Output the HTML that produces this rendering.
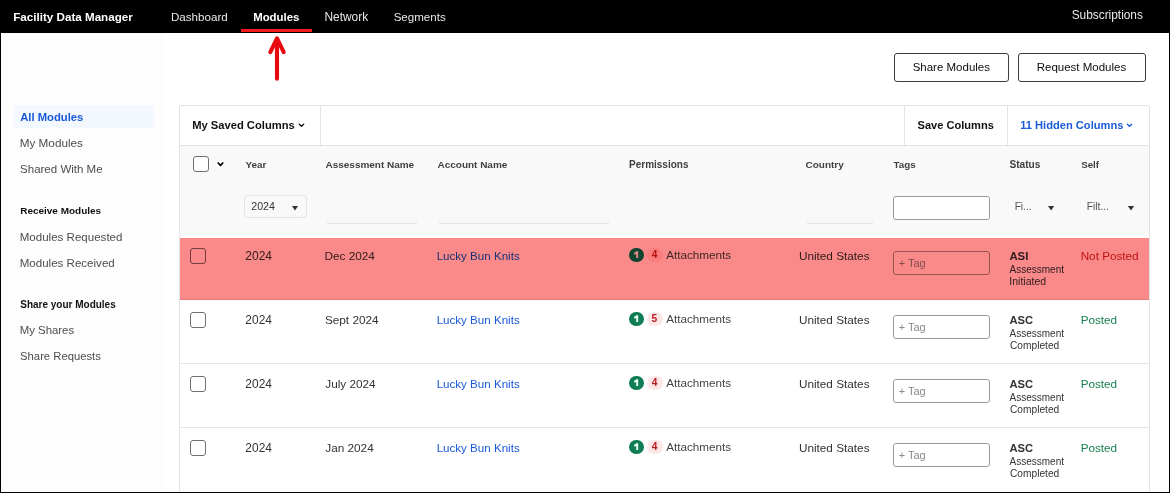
<!DOCTYPE html>
<html><head><meta charset="utf-8"><style>
html,body{margin:0;padding:0;}
body{width:1170px;height:493px;position:relative;overflow:hidden;background:#fff;font-family:"Liberation Sans",sans-serif;}
.a{position:absolute;box-sizing:border-box;}
.t{position:absolute;white-space:pre;font-family:"Liberation Sans",sans-serif;}
.cb{position:absolute;box-sizing:border-box;width:16px;height:16px;border:1px solid #707070;border-radius:3px;background:#fff;}
.badge{position:absolute;box-sizing:border-box;height:14px;border-radius:7px;font-family:"Liberation Sans",sans-serif;font-weight:700;font-size:10px;line-height:14px;text-align:center;}
.tag{position:absolute;box-sizing:border-box;border:1px solid #9a9a9a;border-radius:3px;background:#fff;}
</style></head><body>
<div class="a" style="left:1px;top:33px;width:165px;height:460px;background:#fdfdfd"></div>
<div class="a" style="left:0px;top:0px;width:1170px;height:33px;background:#000"></div>
<div class="a" style="left:241px;top:29px;width:71px;height:3px;background:#fb1a1a"></div>
<svg class="a" style="left:0;top:0" width="1170" height="100"><g stroke="#e8090e" stroke-width="4.1" stroke-linecap="round" stroke-linejoin="round" fill="none"><path d="M277 78.7 L277 39"/><path d="M270.3 52.2 L277 38.4 L283.7 52.2"/></g></svg>
<div class="a" style="left:894px;top:53px;width:115px;height:29px;border:1px solid #3c3c3c;border-radius:3px;background:#fff"></div>
<div class="a" style="left:1018px;top:53px;width:128px;height:29px;border:1px solid #3c3c3c;border-radius:3px;background:#fff"></div>
<div class="a" style="left:14px;top:105px;width:140px;height:23px;background:#f3f7fe;border-radius:2px"></div>
<div class="a" style="left:179px;top:105px;width:971px;height:400px;border:1px solid #e2e2e2;border-radius:2px;background:#fff"></div>
<div class="a" style="left:180px;top:145px;width:969px;height:1px;background:#e2e2e2"></div>
<div class="a" style="left:320px;top:106px;width:1px;height:39px;background:#e2e2e2"></div>
<div class="a" style="left:904px;top:106px;width:1px;height:39px;background:#e2e2e2"></div>
<div class="a" style="left:1007px;top:106px;width:1px;height:39px;background:#e2e2e2"></div>
<div class="a" style="left:180px;top:146px;width:969px;height:90px;background:#f9f9f9"></div>
<div class="cb" style="left:193px;top:156px"></div>
<div class="a" style="left:244px;top:195px;width:63px;height:23px;border:1px solid #e3e3e3;border-radius:4px;background:#f9f9f9"></div>
<div class="a" style="left:326px;top:212px;width:92px;height:12px;border-bottom:1px solid #e4e4e4;border-radius:0 0 3px 3px;background:#f9f8f9"></div>
<div class="a" style="left:438px;top:212px;width:172px;height:12px;border-bottom:1px solid #e4e4e4;border-radius:0 0 3px 3px;background:#f9f8f9"></div>
<div class="a" style="left:806px;top:212px;width:68px;height:12px;border-bottom:1px solid #e4e4e4;border-radius:0 0 3px 3px;background:#f9f8f9"></div>
<div class="tag" style="left:893px;top:196px;width:97px;height:24px"></div>
<svg class="a" style="left:0;top:0" width="1170" height="240"><g fill="none" stroke-linecap="round" stroke-linejoin="round"><path d="M218.2 163 L220.5 165.3 L222.8 163" stroke="#000" stroke-width="1.7"/><path d="M299.3 124.3 L301.5 126.3 L303.7 124.3" stroke="#111" stroke-width="1.35"/><path d="M1127.4 124.3 L1129.5 126.3 L1131.6 124.3" stroke="#1a5ad9" stroke-width="1.35"/></g><g fill="#333"><path d="M292 206 L298 206 L295 210.5 Z"/><path d="M1048 206 L1054.2 206 L1051.1 210.5 Z"/><path d="M1127.8 206 L1134.1 206 L1131 210.5 Z"/></g></svg>
<div class="cb" style="left:190px;top:248px"></div>
<div class="badge" style="left:629px;top:248px;width:15px;background:#117d55"></div>
<svg class="a" style="left:629px;top:248px" width="15" height="14"><path d="M7.2 3.3 H9.2 V10 H7.2 V5.9 L5.1 6.7 V5.1 Z" fill="#eafaf1"/></svg>
<div class="badge" style="left:647px;top:248px;width:16px;background:#fde6e6"></div>
<div class="tag" style="left:893px;top:251px;width:97px;height:24px"></div>
<div class="a" style="left:180px;top:299px;width:969px;height:1px;background:#e6e6e6"></div>
<div class="cb" style="left:190px;top:312px"></div>
<div class="badge" style="left:629px;top:312px;width:15px;background:#117d55"></div>
<svg class="a" style="left:629px;top:312px" width="15" height="14"><path d="M7.2 3.3 H9.2 V10 H7.2 V5.9 L5.1 6.7 V5.1 Z" fill="#eafaf1"/></svg>
<div class="badge" style="left:647px;top:312px;width:16px;background:#fde6e6"></div>
<div class="tag" style="left:893px;top:315px;width:97px;height:24px"></div>
<div class="a" style="left:180px;top:363px;width:969px;height:1px;background:#e6e6e6"></div>
<div class="cb" style="left:190px;top:376px"></div>
<div class="badge" style="left:629px;top:376px;width:15px;background:#117d55"></div>
<svg class="a" style="left:629px;top:376px" width="15" height="14"><path d="M7.2 3.3 H9.2 V10 H7.2 V5.9 L5.1 6.7 V5.1 Z" fill="#eafaf1"/></svg>
<div class="badge" style="left:647px;top:376px;width:16px;background:#fde6e6"></div>
<div class="tag" style="left:893px;top:379px;width:97px;height:24px"></div>
<div class="a" style="left:180px;top:427px;width:969px;height:1px;background:#e6e6e6"></div>
<div class="cb" style="left:190px;top:440px"></div>
<div class="badge" style="left:629px;top:440px;width:15px;background:#117d55"></div>
<svg class="a" style="left:629px;top:440px" width="15" height="14"><path d="M7.2 3.3 H9.2 V10 H7.2 V5.9 L5.1 6.7 V5.1 Z" fill="#eafaf1"/></svg>
<div class="badge" style="left:647px;top:440px;width:16px;background:#fde6e6"></div>
<div class="tag" style="left:893px;top:443px;width:97px;height:24px"></div>
<div class="t" style="left:13.24px;top:11px;font-size:11.64px;line-height:11.64px;font-weight:700;color:#fff">Facility Data Manager</div>
<div class="t" style="left:170.91px;top:11px;font-size:11.61px;line-height:11.61px;font-weight:400;color:#e8e8e8">Dashboard</div>
<div class="t" style="left:253.14px;top:12px;font-size:11.42px;line-height:11.42px;font-weight:700;color:#fff">Modules</div>
<div class="t" style="left:324.48px;top:12px;font-size:11.91px;line-height:11.91px;font-weight:400;color:#e8e8e8">Network</div>
<div class="t" style="left:393.63px;top:12px;font-size:11.57px;line-height:11.57px;font-weight:400;color:#e8e8e8">Segments</div>
<div class="t" style="left:1071.64px;top:10px;font-size:11.89px;line-height:11.89px;font-weight:400;color:#e8e8e8">Subscriptions</div>
<div class="t" style="left:912.66px;top:62px;font-size:11.5px;line-height:11.5px;font-weight:400;color:#0c0c0c">Share Modules</div>
<div class="t" style="left:1036.71px;top:62px;font-size:11.51px;line-height:11.51px;font-weight:400;color:#0c0c0c">Request Modules</div>
<div class="t" style="left:20.16px;top:112px;font-size:11.27px;line-height:11.27px;font-weight:700;color:#1a5ad9">All Modules</div>
<div class="t" style="left:19.74px;top:137px;font-size:11.73px;line-height:11.73px;font-weight:400;color:#4d4d4d">My Modules</div>
<div class="t" style="left:20.06px;top:164px;font-size:11.52px;line-height:11.52px;font-weight:400;color:#4d4d4d">Shared With Me</div>
<div class="t" style="left:20.19px;top:206px;font-size:9.97px;line-height:9.97px;font-weight:700;color:#111">Receive Modules</div>
<div class="t" style="left:19.74px;top:232px;font-size:11.56px;line-height:11.56px;font-weight:400;color:#4d4d4d">Modules Requested</div>
<div class="t" style="left:19.74px;top:258px;font-size:11.55px;line-height:11.55px;font-weight:400;color:#4d4d4d">Modules Received</div>
<div class="t" style="left:20.3px;top:300px;font-size:9.99px;line-height:9.99px;font-weight:700;color:#111">Share your Modules</div>
<div class="t" style="left:19.75px;top:325px;font-size:11.39px;line-height:11.39px;font-weight:400;color:#4d4d4d">My Shares</div>
<div class="t" style="left:20.12px;top:351px;font-size:11.25px;line-height:11.25px;font-weight:400;color:#4d4d4d">Share Requests</div>
<div class="t" style="left:192.15px;top:120px;font-size:11.19px;line-height:11.19px;font-weight:700;color:#111">My Saved Columns</div>
<div class="t" style="left:917.57px;top:120px;font-size:11.07px;line-height:11.07px;font-weight:700;color:#111">Save Columns</div>
<div class="t" style="left:1020.19px;top:120px;font-size:11.13px;line-height:11.13px;font-weight:700;color:#1a5ad9">11 Hidden Columns</div>
<div class="t" style="left:245.47px;top:160px;font-size:9.89px;line-height:9.89px;font-weight:700;color:#3f3f3f">Year</div>
<div class="t" style="left:325.5px;top:160px;font-size:9.97px;line-height:9.97px;font-weight:700;color:#3f3f3f">Assessment Name</div>
<div class="t" style="left:437.5px;top:160px;font-size:9.97px;line-height:9.97px;font-weight:700;color:#3f3f3f">Account Name</div>
<div class="t" style="left:629.02px;top:160px;font-size:10.0px;line-height:10.0px;font-weight:700;color:#3f3f3f">Permissions</div>
<div class="t" style="left:805.5px;top:160px;font-size:9.98px;line-height:9.98px;font-weight:700;color:#3f3f3f">Country</div>
<div class="t" style="left:893.59px;top:160px;font-size:9.8px;line-height:9.8px;font-weight:700;color:#3f3f3f">Tags</div>
<div class="t" style="left:1009.4px;top:160px;font-size:10.16px;line-height:10.16px;font-weight:700;color:#3f3f3f">Status</div>
<div class="t" style="left:1081.17px;top:160px;font-size:9.78px;line-height:9.78px;font-weight:700;color:#3f3f3f">Self</div>
<div class="t" style="left:251.22px;top:201px;font-size:10.64px;line-height:10.64px;font-weight:400;color:#333">2024</div>
<div class="t" style="left:1014.65px;top:202px;font-size:10.16px;line-height:10.16px;font-weight:400;color:#555">Fi...</div>
<div class="t" style="left:1086.65px;top:202px;font-size:10.32px;line-height:10.32px;font-weight:400;color:#555">Filt...</div>
<div class="t" style="left:245.37px;top:251px;font-size:11.95px;line-height:11.95px;font-weight:400;color:#333">2024</div>
<div class="t" style="left:324.56px;top:250px;font-size:11.77px;line-height:11.77px;font-weight:400;color:#333">Dec 2024</div>
<div class="t" style="left:436.66px;top:251px;font-size:11.59px;line-height:11.59px;font-weight:400;color:#1a5ad9">Lucky Bun Knits</div>
<div class="t" style="left:666.18px;top:249px;font-size:11.7px;line-height:11.7px;font-weight:400;color:#444">Attachments</div>
<div class="t" style="left:798.9px;top:250px;font-size:11.77px;line-height:11.77px;font-weight:400;color:#333">United States</div>
<div class="t" style="left:898.73px;top:258px;font-size:11px;line-height:11px;font-weight:400;color:#8a8a8a">+ Tag</div>
<div class="t" style="left:651.75px;top:250px;font-size:10.2px;line-height:10.2px;font-weight:700;color:#b91c1c">4</div>
<div class="t" style="left:1009.4px;top:251px;font-size:11.4px;line-height:11.4px;font-weight:700;color:#333">ASI</div>
<div class="t" style="left:1009.55px;top:265px;font-size:10px;line-height:10px;font-weight:400;color:#333">Assessment</div>
<div class="t" style="left:1009.34px;top:276px;font-size:10.5px;line-height:10.5px;font-weight:400;color:#333">Initiated</div>
<div class="t" style="left:1080.68px;top:250px;font-size:11.71px;line-height:11.71px;font-weight:400;color:#c21f26">Not Posted</div>
<div class="t" style="left:245.37px;top:315px;font-size:11.95px;line-height:11.95px;font-weight:400;color:#333">2024</div>
<div class="t" style="left:324.93px;top:314px;font-size:11.77px;line-height:11.77px;font-weight:400;color:#333">Sept 2024</div>
<div class="t" style="left:436.66px;top:315px;font-size:11.59px;line-height:11.59px;font-weight:400;color:#1a5ad9">Lucky Bun Knits</div>
<div class="t" style="left:666.18px;top:313px;font-size:11.7px;line-height:11.7px;font-weight:400;color:#444">Attachments</div>
<div class="t" style="left:798.9px;top:314px;font-size:11.77px;line-height:11.77px;font-weight:400;color:#333">United States</div>
<div class="t" style="left:898.73px;top:322px;font-size:11px;line-height:11px;font-weight:400;color:#8a8a8a">+ Tag</div>
<div class="t" style="left:651.47px;top:314px;font-size:10.2px;line-height:10.2px;font-weight:700;color:#b91c1c">5</div>
<div class="t" style="left:1009.4px;top:315px;font-size:11.19px;line-height:11.19px;font-weight:700;color:#333">ASC</div>
<div class="t" style="left:1009.55px;top:329px;font-size:10px;line-height:10px;font-weight:400;color:#333">Assessment</div>
<div class="t" style="left:1010.02px;top:341px;font-size:10.2px;line-height:10.2px;font-weight:400;color:#333">Completed</div>
<div class="t" style="left:1080.68px;top:314px;font-size:11.67px;line-height:11.67px;font-weight:400;color:#15804f">Posted</div>
<div class="t" style="left:245.37px;top:379px;font-size:11.95px;line-height:11.95px;font-weight:400;color:#333">2024</div>
<div class="t" style="left:325.29px;top:378px;font-size:11.77px;line-height:11.77px;font-weight:400;color:#333">July 2024</div>
<div class="t" style="left:436.66px;top:379px;font-size:11.59px;line-height:11.59px;font-weight:400;color:#1a5ad9">Lucky Bun Knits</div>
<div class="t" style="left:666.18px;top:377px;font-size:11.7px;line-height:11.7px;font-weight:400;color:#444">Attachments</div>
<div class="t" style="left:798.9px;top:378px;font-size:11.77px;line-height:11.77px;font-weight:400;color:#333">United States</div>
<div class="t" style="left:898.73px;top:386px;font-size:11px;line-height:11px;font-weight:400;color:#8a8a8a">+ Tag</div>
<div class="t" style="left:651.75px;top:378px;font-size:10.2px;line-height:10.2px;font-weight:700;color:#b91c1c">4</div>
<div class="t" style="left:1009.4px;top:379px;font-size:11.19px;line-height:11.19px;font-weight:700;color:#333">ASC</div>
<div class="t" style="left:1009.55px;top:393px;font-size:10px;line-height:10px;font-weight:400;color:#333">Assessment</div>
<div class="t" style="left:1010.02px;top:405px;font-size:10.2px;line-height:10.2px;font-weight:400;color:#333">Completed</div>
<div class="t" style="left:1080.68px;top:378px;font-size:11.67px;line-height:11.67px;font-weight:400;color:#15804f">Posted</div>
<div class="t" style="left:245.37px;top:443px;font-size:11.95px;line-height:11.95px;font-weight:400;color:#333">2024</div>
<div class="t" style="left:325.29px;top:442px;font-size:11.77px;line-height:11.77px;font-weight:400;color:#333">Jan 2024</div>
<div class="t" style="left:436.66px;top:443px;font-size:11.59px;line-height:11.59px;font-weight:400;color:#1a5ad9">Lucky Bun Knits</div>
<div class="t" style="left:666.18px;top:441px;font-size:11.7px;line-height:11.7px;font-weight:400;color:#444">Attachments</div>
<div class="t" style="left:798.9px;top:442px;font-size:11.77px;line-height:11.77px;font-weight:400;color:#333">United States</div>
<div class="t" style="left:898.73px;top:450px;font-size:11px;line-height:11px;font-weight:400;color:#8a8a8a">+ Tag</div>
<div class="t" style="left:651.75px;top:442px;font-size:10.2px;line-height:10.2px;font-weight:700;color:#b91c1c">4</div>
<div class="t" style="left:1009.4px;top:443px;font-size:11.19px;line-height:11.19px;font-weight:700;color:#333">ASC</div>
<div class="t" style="left:1009.55px;top:457px;font-size:10px;line-height:10px;font-weight:400;color:#333">Assessment</div>
<div class="t" style="left:1010.02px;top:469px;font-size:10.2px;line-height:10.2px;font-weight:400;color:#333">Completed</div>
<div class="t" style="left:1080.68px;top:442px;font-size:11.67px;line-height:11.67px;font-weight:400;color:#15804f">Posted</div>
<div class="a" style="left:180px;top:238px;width:969px;height:62px;background:#fa8a8a;mix-blend-mode:multiply"></div>
<div class="a" style="left:0;top:0;width:1px;height:493px;background:#000"></div>
<div class="a" style="left:1169px;top:0;width:1px;height:493px;background:#000"></div>
<div class="a" style="left:0;top:492px;width:1170px;height:1px;background:#000"></div>
</body></html>
